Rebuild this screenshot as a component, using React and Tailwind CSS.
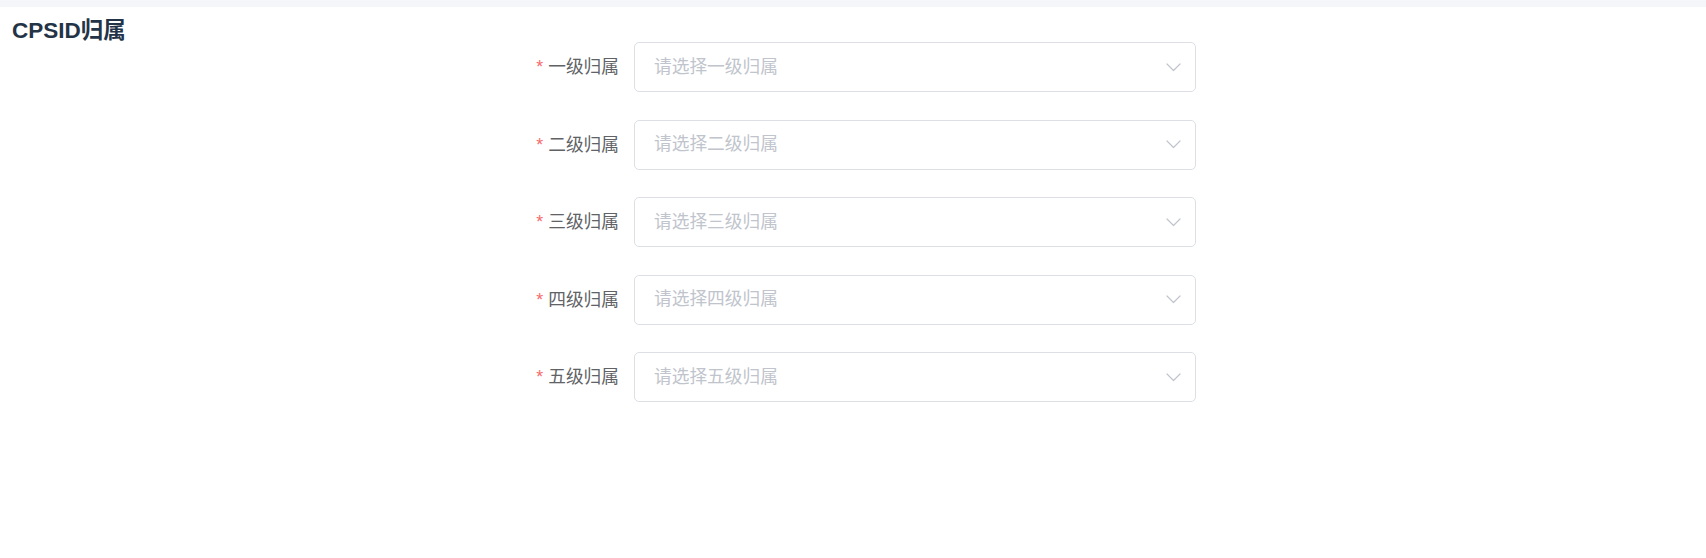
import React from "react";

const levels = ["一", "二", "三", "四", "五"];

const FONT = '"Liberation Sans", "Noto Sans CJK SC", sans-serif';

function ChevronDown() {
  return (
    <svg width="15" height="9" viewBox="0 0 15 9" fill="none">
      <polyline
        points="1,1 7.5,7.5 14,1"
        stroke="#c0c4cc"
        strokeWidth="1.2"
        strokeLinecap="round"
        strokeLinejoin="round"
      />
    </svg>
  );
}

function SelectRow({ level }) {
  return (
    <div className="flex items-center">
      <label className="w-[634px] shrink-0 pr-[15px] text-right text-[17.7px] leading-[50px] text-[#606266]">
        <span className="mr-[5px] text-[#f56c6c]">*</span>
        {level}级归属
      </label>
      <div className="flex h-[50px] w-[562px] items-center justify-between rounded-[5px] border border-[#dcdfe6] bg-white pl-[19px] pr-[14px]">
        <span className="text-[17.7px] text-[#c0c4cc]">请选择{level}级归属</span>
        <ChevronDown />
      </div>
    </div>
  );
}

export default function App() {
  return (
    <div className="min-h-screen bg-white" style={{ fontFamily: FONT }}>
      <div className="h-[6.5px] bg-[#f5f6f9]" />
      <div className="px-[12px] pt-[12px]">
        <h2 className="text-[22.5px] font-bold leading-[23.5px] text-[#243447]">
          CPSID归属
        </h2>
      </div>
      <form className="flex flex-col gap-[27.5px]">
        {levels.map((lv) => (
          <SelectRow key={lv} level={lv} />
        ))}
      </form>
    </div>
  );
}
